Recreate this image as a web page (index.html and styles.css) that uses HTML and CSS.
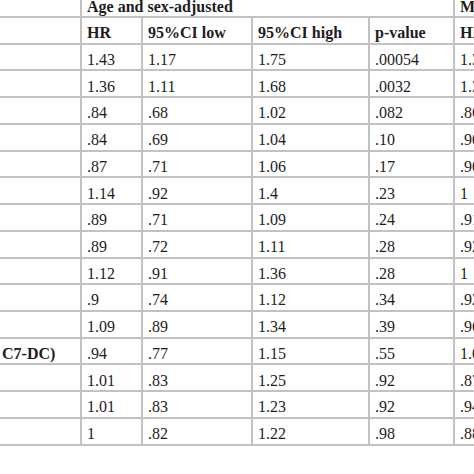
FILE: index.html
```html
<!DOCTYPE html>
<html>
<head>
<meta charset="utf-8">
<link rel="stylesheet" href="styles.css">
</head>
<body>
<table class="grid">
  <colgroup>
    <col class="c-label"><col class="c-hr"><col class="c-low"><col class="c-high"><col class="c-p"><col class="c-next">
  </colgroup>
  <thead>
    <tr class="head">
      <th></th>
      <th colspan="4">Age and sex-adjusted</th>
      <th>Multivariable</th>
    </tr>
    <tr class="head">
      <th></th>
      <th>HR</th>
      <th>95%CI low</th>
      <th>95%CI high</th>
      <th>p-value</th>
      <th>HR</th>
    </tr>
  </thead>
  <tbody>
    <tr><td></td><td>1.43</td><td>1.17</td><td>1.75</td><td>.00054</td><td>1.38</td></tr>
    <tr><td></td><td>1.36</td><td>1.11</td><td>1.68</td><td>.0032</td><td>1.31</td></tr>
    <tr><td></td><td>.84</td><td>.68</td><td>1.02</td><td>.082</td><td>.86</td></tr>
    <tr><td></td><td>.84</td><td>.69</td><td>1.04</td><td>.10</td><td>.90</td></tr>
    <tr><td></td><td>.87</td><td>.71</td><td>1.06</td><td>.17</td><td>.90</td></tr>
    <tr><td></td><td>1.14</td><td>.92</td><td>1.4</td><td>.23</td><td>1</td></tr>
    <tr><td></td><td>.89</td><td>.71</td><td>1.09</td><td>.24</td><td>.91</td></tr>
    <tr><td></td><td>.89</td><td>.72</td><td>1.11</td><td>.28</td><td>.92</td></tr>
    <tr><td></td><td>1.12</td><td>.91</td><td>1.36</td><td>.28</td><td>1</td></tr>
    <tr><td></td><td>.9</td><td>.74</td><td>1.12</td><td>.34</td><td>.92</td></tr>
    <tr><td></td><td>1.09</td><td>.89</td><td>1.34</td><td>.39</td><td>.96</td></tr>
    <tr><td class="label">C7-DC)</td><td>.94</td><td>.77</td><td>1.15</td><td>.55</td><td>1.0</td></tr>
    <tr><td></td><td>1.01</td><td>.83</td><td>1.25</td><td>.92</td><td>.87</td></tr>
    <tr><td></td><td>1.01</td><td>.83</td><td>1.23</td><td>.92</td><td>.94</td></tr>
    <tr><td></td><td>1</td><td>.82</td><td>1.22</td><td>.98</td><td>.88</td></tr>
  </tbody>
</table>
</body>
</html>
```
FILE: styles.css
```css
html, body {
  margin: 0;
  padding: 0;
  background: #ffffff;
  overflow: hidden;
}
body {
  width: 474px;
  height: 474px;
}
.grid {
  border-collapse: collapse;
  table-layout: fixed;
  width: 539px;
  margin-top: -10.7px;
  font-family: "Liberation Serif", "Times New Roman", serif;
  font-size: 16px;
  line-height: 18px;
  color: #1e1c1d;
}
.c-label { width: 81px; }
.c-hr { width: 61px; }
.c-low { width: 110px; }
.c-high { width: 117px; }
.c-p { width: 85px; }
.c-next { width: 85px; }
.grid tr {
  height: 26.73px;
}
.grid th,
.grid td {
  border: 2px solid #c2c2c2;
  padding: 0 0 0.5px 5px;
  text-align: left;
  vertical-align: bottom;
  white-space: nowrap;
  overflow: hidden;
}
.grid th {
  font-weight: bold;
}
.grid tr > :first-child {
  border-left: none;
}
.grid td.label {
  font-weight: bold;
  padding-left: 2px;
}
```
